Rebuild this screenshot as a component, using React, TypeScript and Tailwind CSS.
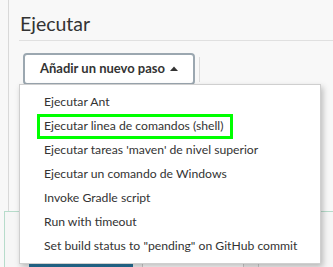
import React from "react";

const items = [
  "Ejecutar Ant",
  "Ejecutar linea de comandos (shell)",
  "Ejecutar tareas 'maven' de nivel superior",
  "Ejecutar un comando de Windows",
  "Invoke Gradle script",
  "Run with timeout",
  'Set build status to "pending" on GitHub commit',
];

export default function App() {
  return (
    <div
      className="relative flex h-[267px] w-[333px] overflow-hidden bg-[#f8f8f8] text-[#333]"
      style={{fontFamily: 'Lato, "Noto Sans", sans-serif'}}
    >
      {/* left rail */}
      <div className="w-[9px] shrink-0 border-r border-[#d9d9d9]" />

      <div className="flex flex-1 flex-col pl-[10px] pt-[11px]">
        <h2 className="border-b border-[#e0e0e0] pb-[3px] pl-[1px] text-[19.5px] leading-[26px] text-[#333]">
          Ejecutar
        </h2>

        <div className="mt-[12px] flex items-center">
          <button className="ml-[4px] flex h-[32px] w-[172px] items-center justify-center gap-[5px] rounded-[4px] border-2 border-[#9ba7b0] bg-white text-[13px] font-bold text-[#333]">
            Añadir un nuevo paso
            <svg width="8" height="5" viewBox="0 0 8 5" className="mb-[1px]">
              <path d="M0 5 L4 0.5 L8 5 Z" fill="#333" />
            </svg>
          </button>
          <div className="ml-[4px] h-[25px] w-px bg-[#dcdcdc]" />
        </div>

        {/* content behind the menu */}
        <div className="mt-auto -ml-[15px] flex h-[56px] flex-col border-l border-t border-[#b7dccb] bg-[#f6f6f6]">
          <div className="mt-auto flex h-[9px] items-end">
            <div className="ml-[24px] h-[9px] w-[104px] bg-gradient-to-b from-[#3d8db3] to-[#236f98]" />
            <div className="ml-[9px] h-[9px] w-[101px] border-l border-[#cfcfcf] bg-white" />
            <div className="h-[9px] w-[16px] border-x border-[#cfcfcf] bg-[#f3f3f3]" />
          </div>
        </div>
      </div>

      {/* dropdown menu */}
      <ul className="absolute left-[19px] top-[84px] w-[302px] border border-[#cfcfcf] bg-white py-[5px] text-[12.2px] text-[#333] shadow-[2px_3px_6px_rgba(0,0,0,0.25)]">
        {items.map((item, i) => (
          <li key={item} className="flex h-[24px] items-center whitespace-nowrap pl-[24px] leading-none">
            {i === 1 ? (
              <span className="-ml-[7px] flex h-[25px] items-center border-[3px] border-[#00ff00] pl-[4px] pr-[6px]">
                {item}
              </span>
            ) : (
              item
            )}
          </li>
        ))}
      </ul>
    </div>
  );
}
